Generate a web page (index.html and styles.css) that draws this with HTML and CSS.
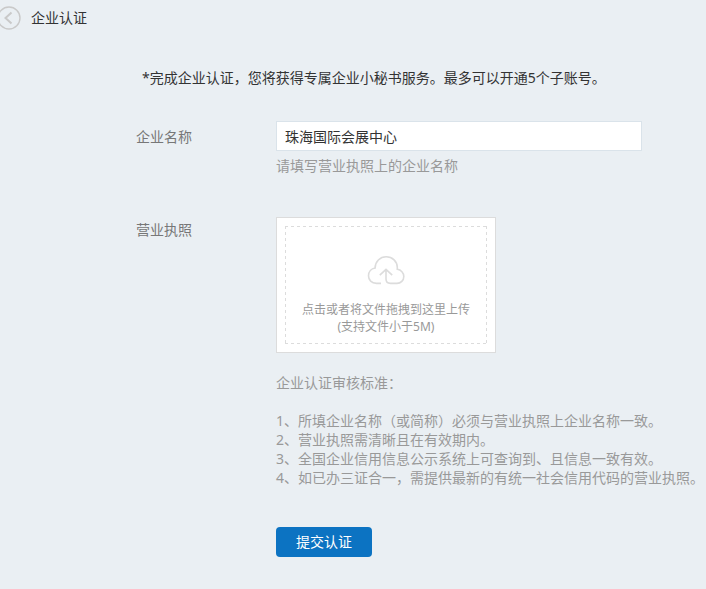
FILE: index.html
```html
<!DOCTYPE html>
<html lang="zh-CN">
<head>
<meta charset="utf-8">
<meta name="viewport" content="width=device-width, initial-scale=1">
<title>企业认证</title>
<link rel="stylesheet" href="styles.css">
</head>
<body>
<header class="page-header">
  <a class="back" href="#" aria-label="返回">
    <svg viewBox="0 0 24 24" width="24" height="24" fill="none" stroke="#c9c9c9">
      <circle cx="12" cy="12" r="11" stroke-width="1.4"/>
      <path d="M14.500 6.500 8.500 12l6 5.500" stroke-width="2"/>
    </svg>
  </a>
  <h1 class="title">企业认证</h1>
</header>
<main class="content">
  <p class="note">*完成企业认证，您将获得专属企业小秘书服务。最多可以开通5个子账号。</p>
  <form class="form">
    <label class="label" for="company">企业名称</label>
    <div class="field">
      <input class="text-input" id="company" type="text" value="珠海国际会展中心">
      <p class="hint">请填写营业执照上的企业名称</p>
    </div>
    <label class="label label-top" for="license">营业执照</label>
    <div class="field">
      <div class="upload">
        <div class="drop-area">
          <svg class="cloud" viewBox="0 0 38 30" width="38" height="30" fill="none" stroke="#dcdcdc" stroke-width="1.6">
            <path d="M14 28.400H9.500C4.500 28.400 1.500 25 1.500 20.800C1.500 16.500 4.400 13.500 8.100 13C8.200 6.500 13 1.800 19.200 1.800S30.300 6.500 30.300 12.500V15M30.300 14.300C34 14.800 36.800 17.800 36.800 21.400C36.800 25.400 33.800 28.400 30 28.400H23.500C20.600 28.400 19 26.800 19 24V14.300M12.800 20.200 19 14.300l6.200 5.900"/>
          </svg>
          <span>点击或者将文件拖拽到这里上传</span>
          <span>(支持文件小于5M)</span>
        </div>
        <input class="file-input" id="license" type="file">
      </div>
      <section class="criteria">
        <h2 class="criteria-title">企业认证审核标准：</h2>
        <p>1、所填企业名称（或简称）必须与营业执照上企业名称一致。</p>
        <p>2、营业执照需清晰且在有效期内。</p>
        <p>3、全国企业信用信息公示系统上可查询到、且信息一致有效。</p>
        <p>4、如已办三证合一，需提供最新的有统一社会信用代码的营业执照。</p>
      </section>
      <button class="submit" type="submit">提交认证</button>
    </div>
  </form>
</main>
</body>
</html>
```
FILE: styles.css
```css
* {
  box-sizing: border-box;
}

body,
h1,
h2,
p {
  margin: 0;
  font-size: 14px;
  font-weight: 400;
}

body {
  background: #eaeff3;
  color: #333;
  font-family: "Noto Sans", "Noto Sans CJK SC", sans-serif;
  line-height: 20px;
}

.page-header {
  display: flex;
  align-items: center;
  gap: 10px;
  padding-top: 6px;
  margin-left: -3px;
}

.back,
.cloud {
  display: block;
}

.back {
  height: 24px;
}

.content {
  padding: 38px 0 32px 136px;
}

.note {
  padding-left: 6px;
}

.form {
  display: grid;
  grid-template-columns: 140px minmax(0, 1fr);
  row-gap: 41px;
  margin-top: 33px;
}

.label {
  padding-top: 6px;
  justify-self: start;
  align-self: start;
  color: #777;
}

.label-top {
  padding-top: 3px;
}

.text-input {
  display: block;
  width: 100%;
  max-width: 366px;
  height: 30px;
  padding: 0 8px;
  border: 1px solid #dae3ea;
  border-radius: 0;
  background: #fff;
  color: #333;
  font: inherit;
}

.hint {
  margin-top: 5px;
  color: #999;
}

.upload {
  position: relative;
  width: 220px;
  padding: 8px;
  border: 1px solid #dcdcdc;
  background: #fff;
}

.drop-area {
  --dash: #dcdcdc 0 3px, transparent 3px 6px;
  display: flex;
  flex-direction: column;
  align-items: center;
  padding: 29px 0 9px;
  background:
    repeating-linear-gradient(90deg, var(--dash)) top / 100% 1px no-repeat,
    repeating-linear-gradient(90deg, var(--dash)) bottom / 100% 1px no-repeat,
    repeating-linear-gradient(var(--dash)) left / 1px 100% no-repeat,
    repeating-linear-gradient(var(--dash)) right / 1px 100% no-repeat;
  color: #999;
  font-size: 12px;
  line-height: 17px;
}

.cloud {
  margin-bottom: 16px;
}

.file-input {
  position: absolute;
  inset: 0;
  width: 100%;
  height: 100%;
  opacity: 0;
  cursor: pointer;
}

.criteria {
  margin-top: 20px;
  color: #999;
  line-height: 19px;
}

.criteria-title {
  margin-bottom: 19px;
}

.submit {
  display: block;
  height: 30px;
  margin-top: 40px;
  padding: 0 20px;
  border: 0;
  border-radius: 4px;
  background: #0c73c2;
  color: #fff;
  font: inherit;
  cursor: pointer;
}
```
